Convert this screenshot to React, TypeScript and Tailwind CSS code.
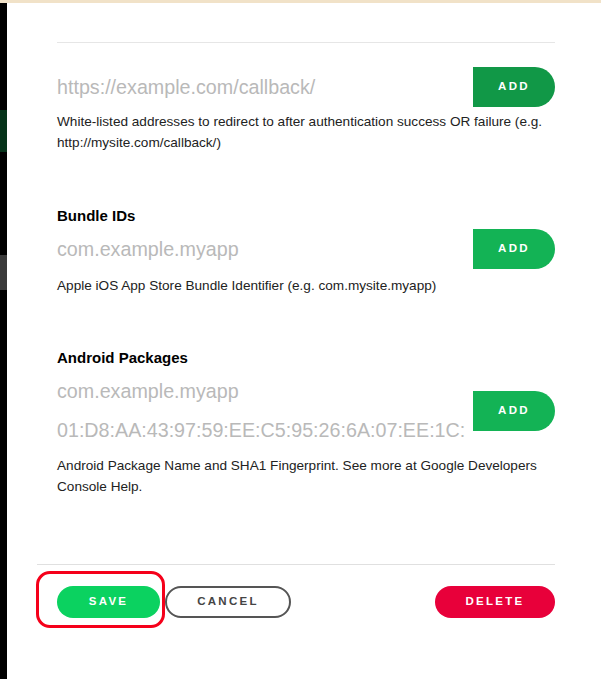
import React from 'react';

const font = { fontFamily: '"Liberation Sans", Arial, sans-serif' };

const AddButton: React.FC<{ dark?: boolean }> = ({ dark }) => (
  <button
    className={`h-10 w-[82px] shrink-0 rounded-r-full text-[11.5px] font-bold tracking-[0.2em] text-white ${
      dark ? 'bg-[#119847]' : 'bg-[#13b355]'
    }`}
  >
    ADD
  </button>
);

const Placeholder: React.FC<{ text: string }> = ({ text }) => (
  <div className="text-[19.7px] leading-[24px] text-[#b9b9b9]">{text}</div>
);

const Help: React.FC<{ children: React.ReactNode }> = ({ children }) => (
  <p className="text-[13.6px] leading-[21px] text-[#222]">{children}</p>
);

const App: React.FC = () => {
  return (
    <div className="flex h-[679px] w-[601px] flex-col overflow-hidden bg-white" style={font}>
      {/* top edge of the page behind */}
      <div className="h-[3px] w-full shrink-0 bg-[#f1e2c8]" />

      <div className="flex flex-1">
        {/* dark sidebar peeking out */}
        <div className="flex w-[7px] shrink-0 flex-col bg-black">
          <div className="mt-[107px] h-[42px] bg-[#06331a]" />
          <div className="mt-[103px] h-[35px] bg-[#3a3a3a]" />
        </div>

        <div className="flex flex-1 flex-col">
          <div className="pl-[50px] pr-[46px]">
            <div className="mt-[39px] h-px bg-[#e6e6e6]" />

            {/* redirect URIs */}
            <div className="mt-[24px] flex items-center justify-between">
              <Placeholder text="https://example.com/callback/" />
              <AddButton dark />
            </div>
            <div className="mt-[4px]">
              <Help>
                White-listed addresses to redirect to after authentication success OR failure (e.g.
                http://mysite.com/callback/)
              </Help>
            </div>

            {/* bundle ids */}
            <h3 className="mt-[53px] text-[15px] font-bold leading-[20px] text-black">Bundle IDs</h3>
            <div className="mt-[3px] flex items-center justify-between">
              <Placeholder text="com.example.myapp" />
              <AddButton />
            </div>
            <div className="mt-[6px]">
              <Help>Apple iOS App Store Bundle Identifier (e.g. com.mysite.myapp)</Help>
            </div>

            {/* android packages */}
            <h3 className="mt-[52px] text-[15px] font-bold leading-[20px] text-black">Android Packages</h3>
            <div className="mt-[11px] flex items-center justify-between">
              <div className="flex flex-col gap-[15px]">
                <Placeholder text="com.example.myapp" />
                <Placeholder text="01:D8:AA:43:97:59:EE:C5:95:26:6A:07:EE:1C:" />
              </div>
              <AddButton />
            </div>
            <div className="mt-[13px]">
              <Help>
                Android Package Name and SHA1 Fingerprint. See more at Google Developers Console Help.
              </Help>
            </div>
          </div>

          {/* footer */}
          <div className="mt-[67px] pl-[30px] pr-[46px]">
            <div className="h-px bg-[#e0e0e0]" />
            <div className="mt-[21px] flex items-center pl-[20px]">
              <div className="relative">
                <div className="pointer-events-none absolute -left-[21px] -top-[15px] h-[57px] w-[129px] rounded-[14px] border-[3px] border-[#f5001a]" />
                <button className="h-8 w-[103px] rounded-full bg-[#0bd260] text-[11.5px] font-bold tracking-[0.2em] text-white">
                  SAVE
                </button>
              </div>
              <button className="ml-[5px] h-8 w-[126px] rounded-full border-2 border-[#555] text-[11.5px] font-bold tracking-[0.2em] text-[#444]">
                CANCEL
              </button>
              <button className="ml-auto h-8 w-[120px] rounded-full bg-[#e8003a] text-[11.5px] font-bold tracking-[0.2em] text-white">
                DELETE
              </button>
            </div>
          </div>
        </div>
      </div>
    </div>
  );
};

export default App;
